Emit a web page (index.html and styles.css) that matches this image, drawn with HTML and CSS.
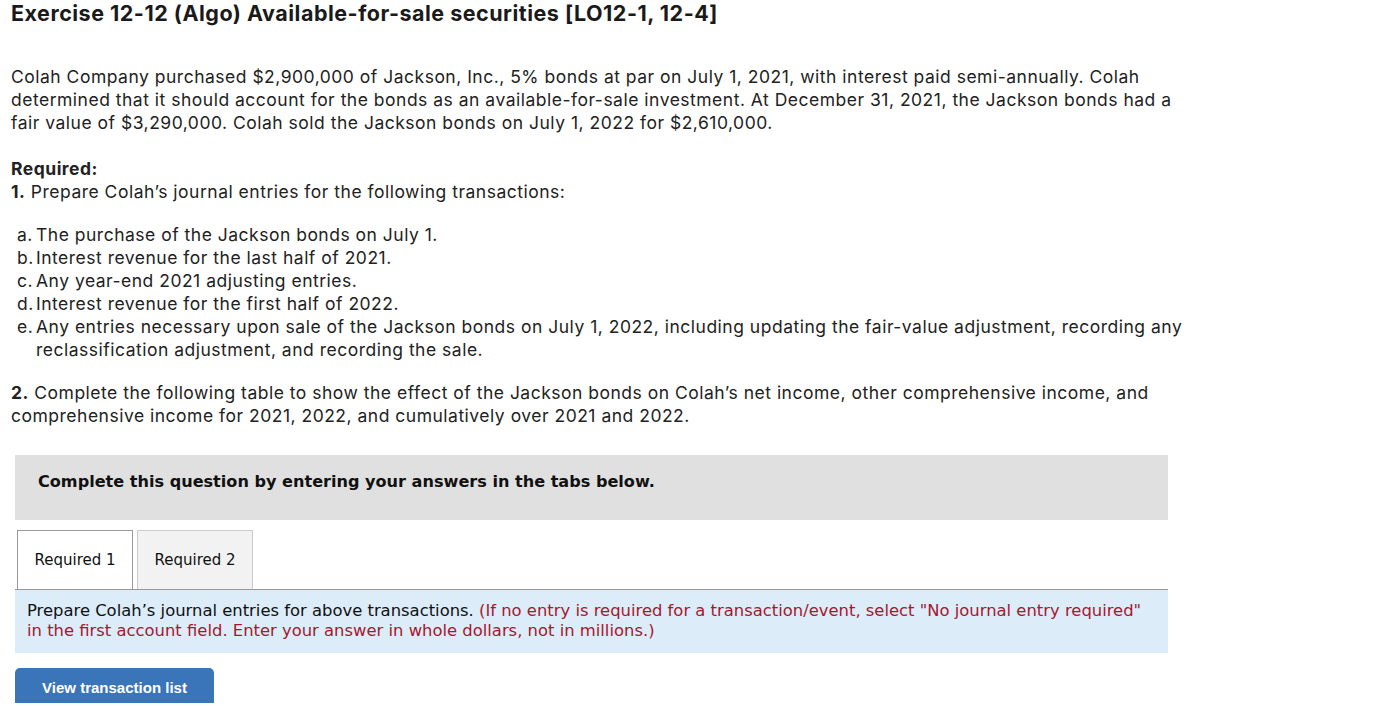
FILE: index.html
```html
<!DOCTYPE html>
<html>
<head>
<meta charset="utf-8">
<link rel="stylesheet" href="styles.css">
</head>
<body>
<div class="page">
  <h1 class="title">Exercise 12-12 (Algo) Available-for-sale securities [LO12-1, 12-4]</h1>
  <p class="intro">Colah Company purchased $2,900,000 of Jackson, Inc., 5% bonds at par on July 1, 2021, with interest paid semi-annually. Colah determined that it should account for the bonds as an available-for-sale investment. At December 31, 2021, the Jackson bonds had a fair value of $3,290,000. Colah sold the Jackson bonds on July 1, 2022 for $2,610,000.</p>
  <p class="req"><b>Required:</b><br><b>1.</b> Prepare Colah’s journal entries for the following transactions:</p>
  <ol class="items">
    <li><span class="mk">a.</span><span>The purchase of the Jackson bonds on July 1.</span></li>
    <li><span class="mk">b.</span><span>Interest revenue for the last half of 2021.</span></li>
    <li><span class="mk">c.</span><span>Any year-end 2021 adjusting entries.</span></li>
    <li><span class="mk">d.</span><span>Interest revenue for the first half of 2022.</span></li>
    <li><span class="mk">e.</span><span>Any entries necessary upon sale of the Jackson bonds on July 1, 2022, including updating the fair-value adjustment, recording any reclassification adjustment, and recording the sale.</span></li>
  </ol>
  <p class="req2"><b>2.</b> Complete the following table to show the effect of the Jackson bonds on Colah’s net income, other comprehensive income, and comprehensive income for 2021, 2022, and cumulatively over 2021 and 2022.</p>
  <div class="box">
    <div class="banner">Complete this question by entering your answers in the tabs below.</div>
    <div class="tabs">
      <div class="tab active">Required 1</div>
      <div class="tab">Required 2</div>
    </div>
    <div class="info">Prepare Colah’s journal entries for above transactions. <span class="red">(If no entry is required for a transaction/event, select "No journal entry required" in the first account field. Enter your answer in whole dollars, not in millions.)</span></div>
    <div class="btnrow"><div class="btn">View transaction list</div></div>
  </div>
</div>
</body>
</html>
```
FILE: styles.css
```css
html, body { margin: 0; padding: 0; background: #fff; }
body { font-family: Inter, "Open Sans", sans-serif; color: #222; }
.page { padding: 0 0 0 11px; width: 1180px; }
.title { font-size: 21.5px; letter-spacing: 0.5px; font-weight: 700; margin: 0; padding-top: 0; line-height: 26px; color: #1a1a1a; }
.intro, .req, .items, .req2 { font-size: 17.5px; letter-spacing: 0.5px; line-height: 23px; }
.intro { margin: 39px 0 0 0; width: 1172px; }
.req { margin: 23px 0 0 0; }
.items { list-style: none; margin: 20px 0 0 0; padding: 0 0 0 6px; }
.items li { display: flex; }
.items .mk { width: 19px; flex: none; }
.req2 { margin: 20px 0 0 0; width: 1160px; }
.box { margin: 28px 0 0 4px; width: 1153px; }
.banner { background: #e0e0e0; height: 65px; box-sizing: border-box; padding: 17px 0 0 23px; line-height: 20px; font-family: "DejaVu Sans", Verdana, sans-serif; font-weight: 700; font-size: 16.1px; color: #111; }
.tabs { display: flex; gap: 4px; margin-top: 10px; padding-left: 2px; border-bottom: 1px solid #999; }
.tab { width: 114px; height: 58px; display: flex; align-items: center; justify-content: center; font-family: "DejaVu Sans", Verdana, sans-serif; font-size: 15px; color: #111; background: #f2f2f2; border: 1px solid #ccc; border-bottom: none; }
.tab.active { background: #fff; border-color: #999; }
.info { background: #dcecf8; padding: 11px 12px 12px 12px; font-family: "DejaVu Sans", Verdana, sans-serif; font-size: 16.4px; line-height: 20px; color: #111; }
.red { color: #a5182e; }
.btnrow { margin-top: 15px; }
.btn { display: inline-flex; justify-content: center; box-sizing: border-box; width: 199px; height: 35px; padding-top: 12px; line-height: 16px; background: #3a75ba; color: #fff; border-radius: 5px 5px 0 0; font-family: "Liberation Sans", Arial, sans-serif; font-weight: 700; font-size: 15px; }
```
